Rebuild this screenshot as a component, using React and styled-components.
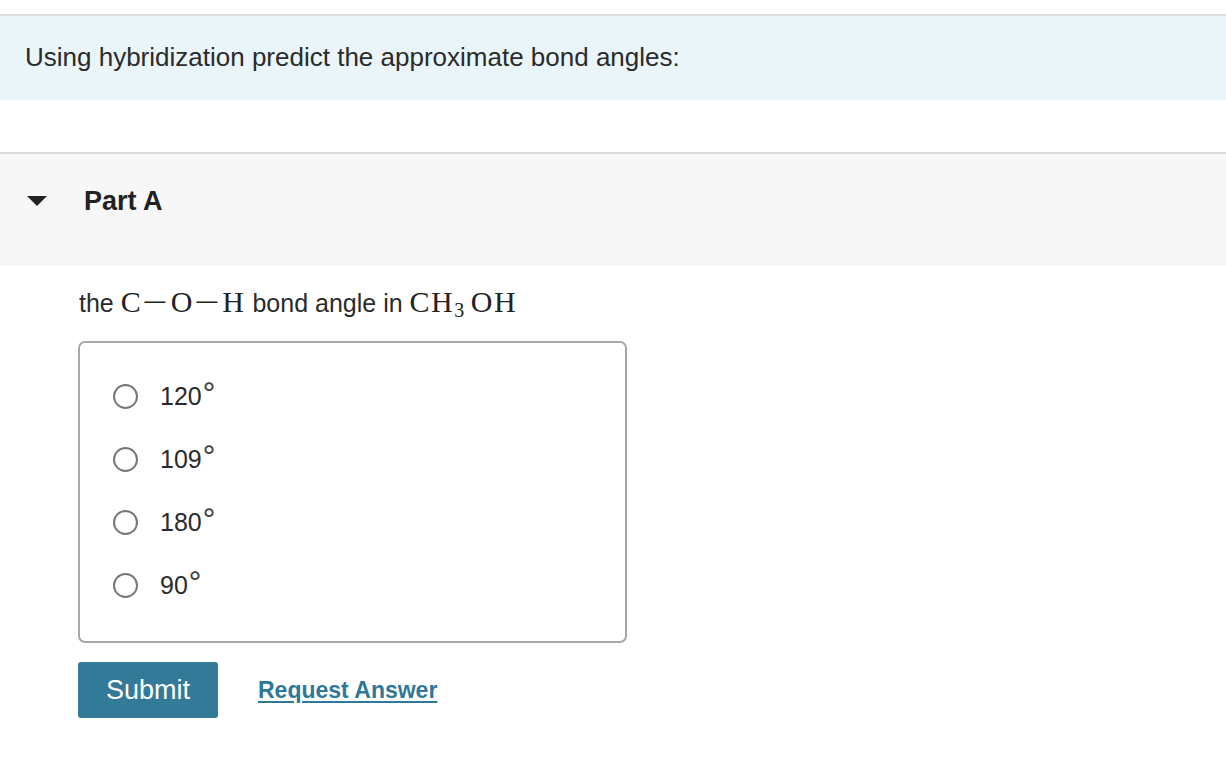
import React from "react";
import styled, { createGlobalStyle } from "styled-components";

const GlobalStyle = createGlobalStyle`
  body {
    margin: 0;
    background: #fff;
    font-family: "Liberation Sans", Arial, sans-serif;
    color: #2b2b2b;
  }
`;

const Page = styled.div`
  padding-top: 14px;
`;

const Intro = styled.div`
  border-top: 2px solid #dddddd;
  background: #e9f5f8;
  height: 86px;
  display: flex;
  align-items: center;
  padding-left: 25px;
  padding-bottom: 2px;
  font-size: 26px;
  box-sizing: border-box;
`;

const PartHeader = styled.div`
  margin-top: 52px;
  border-top: 2px solid #dddddd;
  background: #f7f7f7;
  height: 114px;
  display: flex;
  align-items: center;
  padding-bottom: 18px;
  box-sizing: border-box;
`;

const Caret = styled.span`
  width: 0;
  height: 0;
  margin-left: 27px;
  margin-right: 37px;
  border-left: 10px solid transparent;
  border-right: 10px solid transparent;
  border-top: 10px solid #222;
`;

const PartTitle = styled.h2`
  margin: 0;
  font-size: 27px;
  font-weight: 700;
  color: #222;
`;

const Body = styled.div`
  padding-left: 79px;
`;

const Question = styled.p`
  margin: 20px 0 22px;
  font-size: 25px;
  line-height: 32px;
  display: flex;
  align-items: baseline;
  gap: 7px;
`;

const Math = styled.span`
  font-family: "Liberation Serif", "Times New Roman", serif;
  font-size: 30px;
  letter-spacing: 1.5px;
  color: #222;

  sub {
    font-size: 20px;
    vertical-align: -5px;
    line-height: 0;
    margin-right: 5px;
  }
`;

const Bond = styled.span`
  display: inline-block;
  transform: scaleX(1.5);
  margin: 0 5px;
`;

const Choices = styled.div`
  width: 549px;
  height: 302px;
  box-sizing: border-box;
  border: 2px solid #a8a8a8;
  border-radius: 7px;
  margin-left: -1px;
  padding: 41px 0 0 33px;
  display: flex;
  flex-direction: column;
  gap: 38px;
`;

const Choice = styled.label`
  display: flex;
  align-items: center;
  height: 25px;
  font-size: 25px;
  color: #2b2b2b;
`;

const Radio = styled.span`
  width: 21px;
  height: 21px;
  border: 2px solid #777;
  border-radius: 50%;
  margin-right: 22px;
  flex-shrink: 0;
`;

const Label = styled.span`
  line-height: 25px;
`;

const Deg = styled.span`
  font-family: "DejaVu Sans", sans-serif;
  font-size: 29px;
  line-height: 0;
  vertical-align: 2px;
  color: #444;
`;

const Actions = styled.div`
  display: flex;
  align-items: center;
  margin-top: 19px;
  margin-left: -1px;
  gap: 40px;
`;

const SubmitButton = styled.button`
  width: 140px;
  height: 56px;
  border: none;
  border-radius: 3px;
  background: #337a99;
  color: #fff;
  font-family: "Liberation Sans", Arial, sans-serif;
  font-size: 27px;
  cursor: pointer;
`;

const RequestLink = styled.a`
  color: #2f7898;
  font-size: 23px;
  font-weight: 700;
  text-decoration: underline;
  text-underline-offset: 3px;
  cursor: pointer;
`;

const options = ["120", "109", "180", "90"];

const App = () => {
  return (
    <>
      <GlobalStyle />
      <Page>
        <Intro>Using hybridization predict the approximate bond angles:</Intro>
        <PartHeader>
          <Caret />
          <PartTitle>Part A</PartTitle>
        </PartHeader>
        <Body>
          <Question>
            the{" "}
            <Math>
              C<Bond>−</Bond>O<Bond>−</Bond>H
            </Math>{" "}
            bond angle in{" "}
            <Math>
              CH<sub>3</sub>OH
            </Math>
          </Question>
          <Choices>
            {options.map((o) => (
              <Choice key={o}>
                <Radio />
                <Label>
                  {o}
                  <Deg>°</Deg>
                </Label>
              </Choice>
            ))}
          </Choices>
          <Actions>
            <SubmitButton>Submit</SubmitButton>
            <RequestLink>Request Answer</RequestLink>
          </Actions>
        </Body>
      </Page>
    </>
  );
};

export default App;
